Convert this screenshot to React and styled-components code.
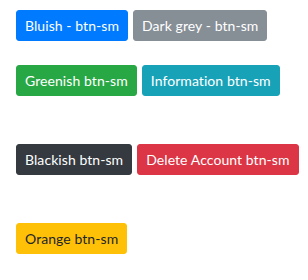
import React from "react";
import styled, { createGlobalStyle } from "styled-components";

const GlobalStyle = createGlobalStyle`
  html, body {
    margin: 0;
    padding: 0;
    background: #ffffff;
  }
  body {
    font-family: "Lato", "Noto Sans", sans-serif;
    color: #212529;
  }
`;

const colors = {
  primary: { bg: "#007bff", fg: "#ffffff" },
  secondary: { bg: "#868e96", fg: "#ffffff" },
  success: { bg: "#28a745", fg: "#ffffff" },
  info: { bg: "#17a2b8", fg: "#ffffff" },
  dark: { bg: "#343a40", fg: "#ffffff" },
  danger: { bg: "#dc3545", fg: "#ffffff" },
  warning: { bg: "#ffc107", fg: "#212529" },
};

const Page = styled.div`
  width: 308px;
  height: 280px;
  overflow: hidden;
  padding: 0 16px;
  box-sizing: border-box;
`;

// only the descenders of the page title peek in at the top edge
const Heading = styled.h2`
  margin: -34px 0 10px;
  height: 34px;
  font-size: 28px;
  line-height: 34px;
  font-weight: 700;
  white-space: nowrap;
`;

const Row = styled.div`
  display: flex;
  gap: 5px;
  margin-top: ${(p) => p.$top}px;
`;

const Button = styled.button`
  font-family: inherit;
  font-size: 14px;
  line-height: 21px;
  letter-spacing: 0.07px;
  padding: 4px 8px;
  border: 1px solid ${(p) => colors[p.$variant].bg};
  border-radius: 3px;
  background: ${(p) => colors[p.$variant].bg};
  color: ${(p) => colors[p.$variant].fg};
  cursor: pointer;
  white-space: nowrap;
`;

export default function App() {
  return (
    <>
      <GlobalStyle />
      <Page>
        <Heading>Bootstrap Sizing</Heading>
        <Row $top={0}>
          <Button $variant="primary">Bluish - btn-sm</Button>
          <Button $variant="secondary">Dark grey - btn-sm</Button>
        </Row>
        <Row $top={24}>
          <Button $variant="success">Greenish btn-sm</Button>
          <Button $variant="info">Information btn-sm</Button>
        </Row>
        <Row $top={48}>
          <Button $variant="dark">Blackish btn-sm</Button>
          <Button $variant="danger">Delete Account btn-sm</Button>
        </Row>
        <Row $top={48}>
          <Button $variant="warning">Orange btn-sm</Button>
        </Row>
      </Page>
    </>
  );
}
